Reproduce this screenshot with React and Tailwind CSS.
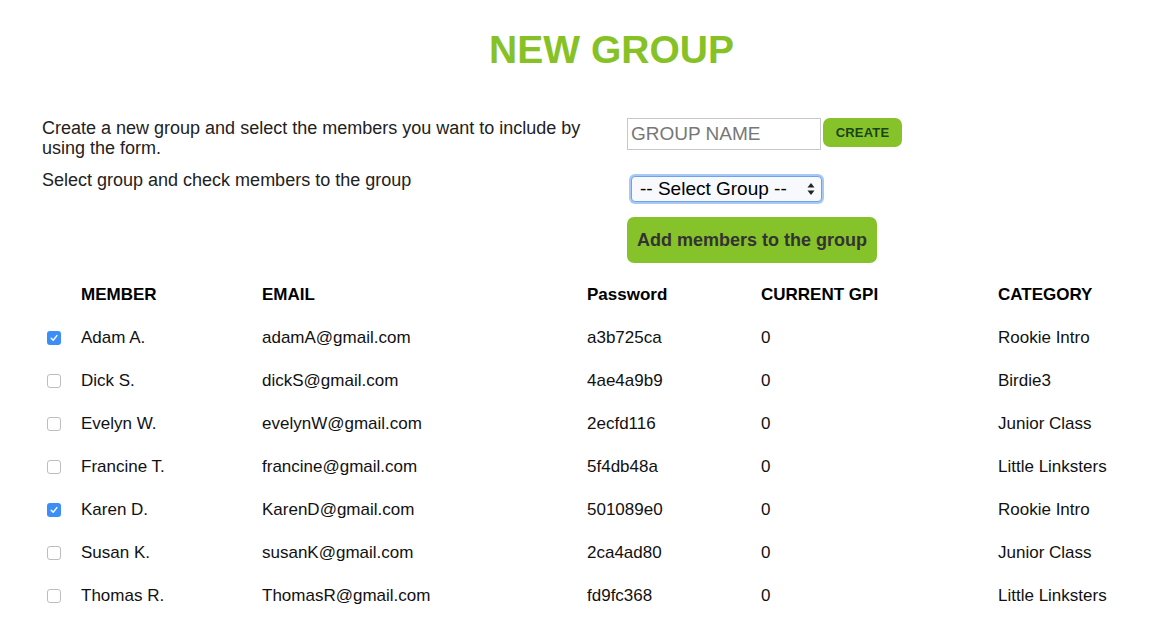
import React, { useState } from 'react';

const members = [
  { name: 'Adam A.', email: 'adamA@gmail.com', password: 'a3b725ca', gpi: '0', category: 'Rookie Intro', checked: true },
  { name: 'Dick S.', email: 'dickS@gmail.com', password: '4ae4a9b9', gpi: '0', category: 'Birdie3', checked: false },
  { name: 'Evelyn W.', email: 'evelynW@gmail.com', password: '2ecfd116', gpi: '0', category: 'Junior Class', checked: false },
  { name: 'Francine T.', email: 'francine@gmail.com', password: '5f4db48a', gpi: '0', category: 'Little Linksters', checked: false },
  { name: 'Karen D.', email: 'KarenD@gmail.com', password: '501089e0', gpi: '0', category: 'Rookie Intro', checked: true },
  { name: 'Susan K.', email: 'susanK@gmail.com', password: '2ca4ad80', gpi: '0', category: 'Junior Class', checked: false },
  { name: 'Thomas R.', email: 'ThomasR@gmail.com', password: 'fd9fc368', gpi: '0', category: 'Little Linksters', checked: false },
];

const Checkbox = ({ checked, onToggle }) => (
  <span
    onClick={onToggle}
    className={
      checked
        ? 'block w-[14px] h-[14px] rounded-[3px] bg-[#3b8ef5] flex items-center justify-center cursor-pointer'
        : 'block w-[14px] h-[14px] rounded-[3px] border border-[#bdbdbd] bg-white cursor-pointer'
    }
  >
    {checked && (
      <svg width="10" height="10" viewBox="0 0 10 10" fill="none">
        <path d="M2.2 5.3 L4.2 7.3 L7.9 2.6" stroke="white" strokeWidth="1.4" strokeLinecap="round" strokeLinejoin="round" />
      </svg>
    )}
  </span>
);

const App = () => {
  const [rows, setRows] = useState(members);
  const toggle = (i) =>
    setRows((r) => r.map((m, j) => (j === i ? { ...m, checked: !m.checked } : m)));

  return (
    <div className="min-h-[640px] bg-white text-[#111] font-['Liberation_Sans',Arial,sans-serif]">
      <h1 className="pl-[70px] pt-[27px] text-center text-[39px] leading-[45px] font-bold text-[#86c226]">
        NEW GROUP
      </h1>

      <div className="flex mt-[46px]">
        <div className="pl-[42px] w-[585px] text-[18px] leading-[20px] text-[#222]">
          <p>Create a new group and select the members you want to include by using the form.</p>
          <p className="mt-[12px]">Select group and check members to the group</p>
        </div>

        <div className="ml-[42px] flex flex-col items-start">
          <div className="flex items-start gap-[2px]">
            <input
              placeholder="GROUP NAME"
              className="w-[194px] h-[32px] border border-[#c8c8c8] px-[3px] text-[19px] placeholder:text-[#777] outline-none"
            />
            <button className="w-[79px] h-[29px] rounded-[7px] bg-[#86c22a] text-[13px] font-bold text-[#1c421c] tracking-[0.2px]">
              CREATE
            </button>
          </div>

          <div className="relative ml-[4px] mt-[26px]">
            <select className="appearance-none w-[191px] h-[26px] pl-[8px] rounded-[4px] border border-[#6ea3ec] ring-[2px] ring-[#a9c8f4] bg-[#f7f9fc] text-[19px] leading-[22px] text-black outline-none">
              <option>-- Select Group --</option>
            </select>
            <svg className="absolute right-[7px] top-[6px] pointer-events-none" width="8" height="14" viewBox="0 0 8 14">
              <path d="M4 1 L7.5 5.5 L0.5 5.5 Z" fill="#222" />
              <path d="M4 13 L7.5 8.5 L0.5 8.5 Z" fill="#222" />
            </svg>
          </div>

          <button className="mt-[15px] w-[250px] h-[46px] rounded-[7px] bg-[#86c22a] text-[18px] font-bold text-[#333]">
            Add members to the group
          </button>
        </div>
      </div>

      <div className="mt-[21px] text-[17px]">
        <div className="flex items-center h-[22px] pl-[81px] font-bold text-black">
          <div className="w-[181px]">MEMBER</div>
          <div className="w-[325px]">EMAIL</div>
          <div className="w-[174px]">Password</div>
          <div className="w-[237px]">CURRENT GPI</div>
          <div>CATEGORY</div>
        </div>
        <div className="mt-[10px]">
          {rows.map((m, i) => (
            <div key={m.email} className="flex items-center h-[43px] pl-[47px]">
              <div className="w-[34px]">
                <Checkbox checked={m.checked} onToggle={() => toggle(i)} />
              </div>
              <div className="w-[181px]">{m.name}</div>
              <div className="w-[325px]">{m.email}</div>
              <div className="w-[174px]">{m.password}</div>
              <div className="w-[237px]">{m.gpi}</div>
              <div>{m.category}</div>
            </div>
          ))}
        </div>
      </div>
    </div>
  );
};

export default App;
